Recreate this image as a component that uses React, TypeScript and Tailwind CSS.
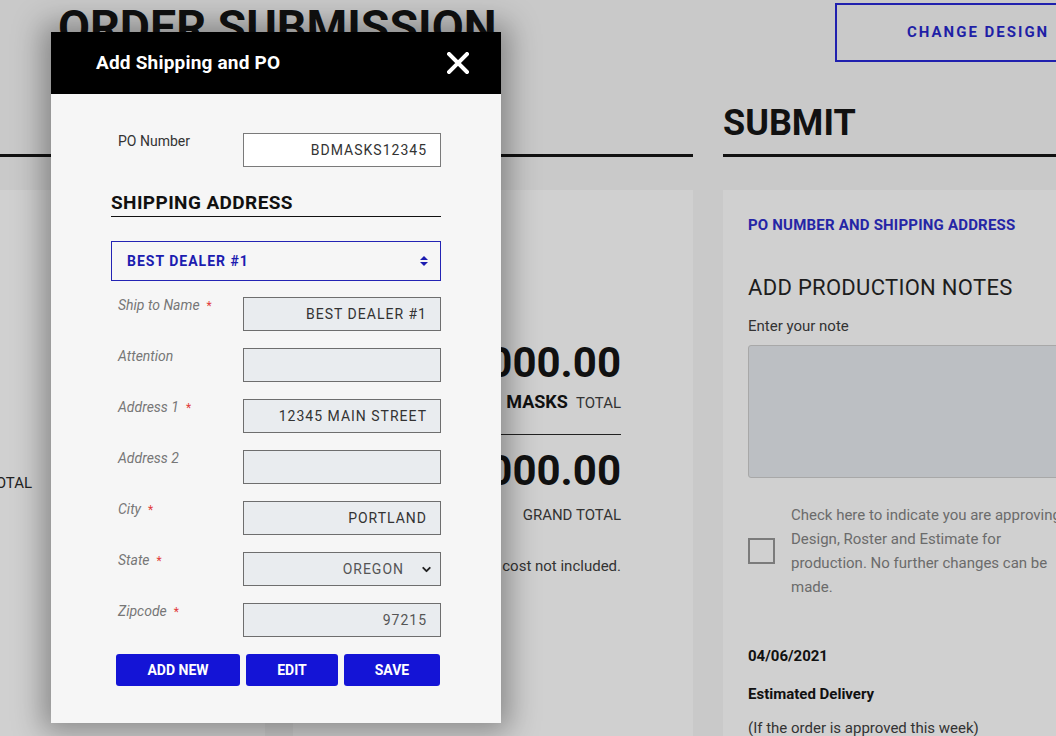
import { ChevronDown } from 'lucide-react';

const fields = [
  { label: 'Ship to Name', required: true, value: 'BEST DEALER #1' },
  { label: 'Attention', required: false, value: '' },
  { label: 'Address 1', required: true, value: '12345 MAIN STREET' },
  { label: 'Address 2', required: false, value: '' },
  { label: 'City', required: true, value: 'PORTLAND' },
  { label: 'State', required: true, value: 'OREGON', select: true },
  { label: 'Zipcode', required: true, value: '97215', muted: true },
];

function SortArrows() {
  return (
    <svg width="8" height="10" viewBox="0 0 8 10" className="fill-[#1c1cb0]">
      <path d="M4 0 L8 4 L0 4 Z" />
      <path d="M0 6 L8 6 L4 10 Z" />
    </svg>
  );
}

function ShippingModal() {
  return (
    <div className="absolute left-[51px] top-[32px] w-[450px] h-[691px] bg-[#f6f6f6] shadow-[0_0_28px_8px_rgba(0,0,0,0.35)]">
      <div className="h-[62px] bg-black flex items-center justify-between pl-[45px] pr-[32px]">
        <div className="text-white text-[19px] font-bold tracking-[0.2px]">Add Shipping and PO</div>
        <svg width="22" height="22" viewBox="0 0 22 22" className="stroke-white" strokeWidth="4" strokeLinecap="square">
          <path d="M2 2 L20 20 M20 2 L2 20" />
        </svg>
      </div>

      <div className="pl-[60px] w-[390px] pt-[39px]">
        <div className="flex items-start h-[34px]">
          <div className="pl-[7px] text-[14px] leading-[16px] text-[#333]">PO Number</div>
          <div className="ml-auto w-[198px] h-[34px] bg-white border border-[#7a7a7a] flex items-center justify-end pr-[13px] text-[14px] tracking-[1px] text-[#333]">
            BDMASKS12345
          </div>
        </div>

        <div className="mt-[24px] border-b-[1.5px] border-[#111] text-[19px] leading-[24px] font-bold text-[#111] tracking-[0.4px] pb-[1px]">
          SHIPPING ADDRESS
        </div>

        <div className="mt-[24px] h-[40px] border border-[#2424b4] flex items-center justify-between pl-[15px] pr-[12px]">
          <span className="text-[14px] font-bold tracking-[1px] text-[#1c1cb0]">BEST DEALER #1</span>
          <SortArrows />
        </div>

        <div className="mt-[16px] flex flex-col gap-[17px]">
          {fields.map((f) => (
            <div key={f.label} className="flex items-start h-[34px]">
              <div className="pl-[7px] text-[14px] leading-[16px] italic text-[#777]">
                {f.label}
                {f.required && <span className="text-[#e23b3b] ml-[7px] not-italic text-[12px]">*</span>}
              </div>
              <div
                className={
                  'ml-auto w-[198px] h-[34px] bg-[#e9ecef] border border-[#6e6e6e] flex items-center justify-end text-[14px] tracking-[1px] ' +
                  (f.select ? 'pr-[7px] text-[#555]' : 'pr-[13px] ') +
                  (f.muted ? 'text-[#555]' : f.select ? '' : 'text-[#333]')
                }
              >
                {f.value}
                {f.select && <ChevronDown size={13} strokeWidth={3.5} className="ml-[16px] text-[#222]" />}
              </div>
            </div>
          ))}
        </div>

        <div className="mt-[17px] ml-[5px] flex gap-[6px]">
          <button className="w-[124px] h-[32px] rounded-[3px] bg-[#1414d6] text-white text-[14px] font-bold">ADD NEW</button>
          <button className="w-[92px] h-[32px] rounded-[3px] bg-[#1414d6] text-white text-[14px] font-bold">EDIT</button>
          <button className="w-[96px] h-[32px] rounded-[3px] bg-[#1414d6] text-white text-[14px] font-bold">SAVE</button>
        </div>
      </div>
    </div>
  );
}

export default function App() {
  return (
    <div className="relative w-[1056px] h-[736px] overflow-hidden bg-[#c9c9c9] font-[Roboto,'Liberation_Sans',sans-serif]">
      <div className="flex h-[100px]">
        <div className="pl-[58px] -mt-[3px] text-[46.5px] font-bold text-[#111] leading-[60px] whitespace-nowrap">ORDER SUBMISSION</div>
        <div className="ml-auto mt-[3px] w-[240px] -mr-[19px] h-[59px] border-2 border-[#2020ae] flex items-center pl-[70px] shrink-0">
          <span className="text-[15px] font-bold tracking-[2px] text-[#1f1fa6] whitespace-nowrap">CHANGE DESIGN</span>
        </div>
      </div>

      <div className="flex">
        <div className="w-[693px] shrink-0 h-[57px] border-b-[3px] border-[#111]"></div>
        <div className="ml-[30px] flex-1 h-[57px] border-b-[3px] border-[#111] flex items-center pb-[8px]">
          <span className="text-[36px] font-bold text-[#111] leading-none">SUBMIT</span>
        </div>
      </div>

      <div className="mt-[33px] flex">
        <div className="w-[265px] shrink-0 h-[560px] bg-[#d0d0d0] pt-[282px]">
          <div className="w-[32px] flex justify-end whitespace-nowrap text-[15px] text-[#222]">GRAND TOTAL</div>
        </div>

        <div className="ml-[28px] w-[400px] shrink-0 h-[560px] bg-[#d0d0d0] pr-[72px] flex flex-col items-end text-[#111]">
          <div className="mt-[150px] text-[42px] font-bold leading-[46px]">$12,000.00</div>
          <div className="mt-[2px] flex items-baseline gap-[8px] whitespace-nowrap">
            <span className="text-[18px] font-bold">MASKS</span>
            <span className="text-[15px] text-[#333]">TOTAL</span>
          </div>
          <div className="mt-[19px] w-[200px] border-b border-[#222]"></div>
          <div className="mt-[13px] text-[42px] font-bold leading-[46px]">$12,000.00</div>
          <div className="mt-[10px] text-[15px] text-[#333]">GRAND TOTAL</div>
          <div className="mt-[28px] text-[15px] text-[#333] whitespace-nowrap">*Shipping cost not included.</div>
        </div>

        <div className="ml-[30px] w-[420px] shrink-0 h-[560px] bg-[#d0d0d0] pl-[25px] pt-[24px]">
          <div className="text-[15px] font-bold text-[#2525a6] tracking-[0.2px]">PO NUMBER AND SHIPPING ADDRESS</div>
          <div className="mt-[34px] text-[22px] text-[#1d1d1d] tracking-[0.3px]">ADD PRODUCTION NOTES</div>
          <div className="mt-[11px] text-[15px] text-[#333]">Enter your note</div>
          <div className="mt-[8px] h-[133px] bg-[#bcbfc3] border border-[#a8a8a8] rounded-[3px]"></div>
          <div className="mt-[25px] flex items-center">
            <div className="w-[27px] h-[26px] border-2 border-[#7b7b7b] shrink-0"></div>
            <div className="ml-[16px] text-[15px] leading-[24px] text-[#6b6b6b] whitespace-nowrap">
              Check here to indicate you are approving the
              <br />
              Design, Roster and Estimate for
              <br />
              production. No further changes can be
              <br />
              made.
            </div>
          </div>
          <div className="mt-[46px] text-[15px] font-bold text-[#111]">04/06/2021</div>
          <div className="mt-[15px] text-[15px] font-bold text-[#111]">Estimated Delivery</div>
          <div className="mt-[12px] text-[15px] text-[#333]">(If the order is approved this week)</div>
        </div>
      </div>

      <ShippingModal />
    </div>
  );
}
